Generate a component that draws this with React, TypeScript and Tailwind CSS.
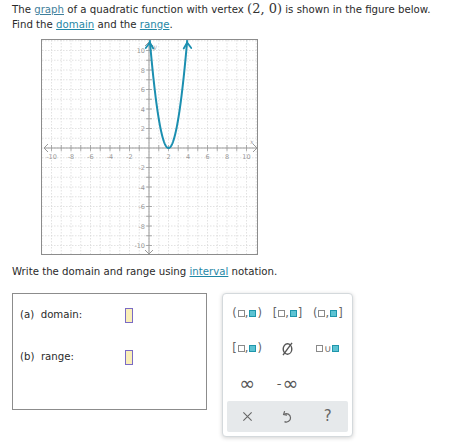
import React from "react";

const U = 9.75;
const OX = 107;
const OY = 108;

function Graph() {
    const ticks = Array.from({ length: 23 }, (_, i) => i - 11);
    const pts: string[] = [];
    for (let x = 0.08; x <= 3.921; x += 0.04) {
        const y = 3 * (x - 2) * (x - 2);
        pts.push(`${(OX + x * U).toFixed(2)},${(OY - y * U).toFixed(2)}`);
    }
    return (
        <svg width="217" height="216" viewBox="0 0 217 216" className="block">
            {/* grid */}
            {ticks.map((t) => (
                <g key={t}>
                    <line x1={OX + t * U} y1={0} x2={OX + t * U} y2={216} stroke="#d6d6d6" strokeWidth="0.7" strokeDasharray="1.5 1.5" />
                    <line x1={0} y1={OY + t * U} x2={217} y2={OY + t * U} stroke="#d6d6d6" strokeWidth="0.7" strokeDasharray="1.5 1.5" />
                </g>
            ))}
            {/* axes */}
            <line x1={2} y1={OY} x2={215} y2={OY} stroke="#9a9a9a" strokeWidth="1" />
            <line x1={OX} y1={2} x2={OX} y2={214} stroke="#9a9a9a" strokeWidth="1" />
            <polyline points={`6,${OY - 4} 2,${OY} 6,${OY + 4}`} fill="none" stroke="#9a9a9a" strokeWidth="1" />
            <polyline points={`211,${OY - 4} 215,${OY} 211,${OY + 4}`} fill="none" stroke="#9a9a9a" strokeWidth="1" />
            <polyline points={`${OX - 4},6 ${OX},2 ${OX + 4},6`} fill="none" stroke="#9a9a9a" strokeWidth="1" />
            <polyline points={`${OX - 4},210 ${OX},214 ${OX + 4},210`} fill="none" stroke="#9a9a9a" strokeWidth="1" />
            {ticks
                .filter((t) => t !== 0 && Math.abs(t) <= 10)
                .map((t) => (
                    <g key={"k" + t}>
                        <line x1={OX + t * U} y1={OY - 3} x2={OX + t * U} y2={OY + 3} stroke="#9a9a9a" strokeWidth="0.8" />
                        <line x1={OX - 3} y1={OY - t * U} x2={OX + 3} y2={OY - t * U} stroke="#9a9a9a" strokeWidth="0.8" />
                    </g>
                ))}
            {[-10, -8, -6, -4, -2, 2, 4, 6, 8, 10].map((t) => (
                <g key={"l" + t} fill="#9a9a9a" fontSize="6.5" fontFamily="'DejaVu Sans', sans-serif">
                    <text x={OX + t * U} y={OY + 11} textAnchor="middle">
                        {t}
                    </text>
                    <text x={OX - 4} y={OY - t * U + 2.5} textAnchor="end">
                        {t}
                    </text>
                </g>
            ))}
            <text x={OX + 4} y={9} fill="#9a9a9a" fontSize="6.5" fontStyle="italic" fontFamily="'DejaVu Serif', serif">
                y
            </text>
            <text x={208} y={OY - 4} fill="#9a9a9a" fontSize="6.5" fontStyle="italic" fontFamily="'DejaVu Serif', serif">
                x
            </text>
            {/* curve */}
            <polyline points={pts.join(" ")} fill="none" stroke="#1b8fb0" strokeWidth="2" strokeLinejoin="round" />
            <polyline points={`${OX + 0.08 * U - 4},8 ${OX + 0.08 * U},2.5 ${OX + 0.08 * U + 3.5},8.5`} fill="none" stroke="#1b8fb0" strokeWidth="1.8" strokeLinecap="round" strokeLinejoin="round" />
            <polyline points={`${OX + 3.92 * U - 3.5},8.5 ${OX + 3.92 * U},2.5 ${OX + 3.92 * U + 4},8`} fill="none" stroke="#1b8fb0" strokeWidth="1.8" strokeLinecap="round" strokeLinejoin="round" />
        </svg>
    );
}

function Sq({ filled }: { filled?: boolean }) {
    return filled ? (
        <span className="inline-block w-[7px] h-[7px] bg-[#5cc3d3] border border-[#1f96ab] mx-[1px]" />
    ) : (
        <span className="inline-block w-[7px] h-[7px] border border-[#8a8a8a] mx-[1px]" />
    );
}

function Interval({ l, r }: { l: string; r: string }) {
    return (
        <span className="flex items-center text-[11.5px] text-[#666]">
            <span>{l}</span>
            <Sq />
            <span className="-ml-[1px]">,</span>
            <Sq filled />
            <span>{r}</span>
        </span>
    );
}

function InputBox() {
    return <span className="inline-block w-[8px] h-[15px] border border-[#7a6bc4] bg-[#faefb8]" />;
}

export default function App() {
    return (
        <div className="bg-white w-[474px] h-[445px] px-[12px] pt-[2px] text-[10.2px] text-[#2a2a2a]" style={{ fontFamily: "'DejaVu Sans', Verdana, sans-serif" }}>
            <p className="leading-[15px]">
                The <span className="text-[#3f7f9c] underline">graph</span> of a quadratic function with vertex{" "}
                <span className="text-[13px] text-[#333] leading-none" style={{ fontFamily: "'DejaVu Serif', serif" }}>
                    (2, 0)
                </span>{" "}
                is shown in the figure below.
                <br />
                Find the <span className="text-[#1f87a6] underline">domain</span> and the{" "}
                <span className="text-[#1f87a6] underline">range</span>.
            </p>

            <div className="ml-[29px] mt-[7px] w-[217px] h-[216px] border border-[#8c8c8c] overflow-hidden">
                <Graph />
            </div>

            <p className="mt-[9px] leading-[15px]">
                Write the domain and range using <span className="text-[#1f87a6] underline">interval</span> notation.
            </p>

            <div className="flex gap-[15px] mt-[14px]">
                <div className="w-[195px] h-[117px] border border-[#8c8c8c] px-[7px] pt-[13px]">
                    <div className="flex items-center h-[16px]">
                        <span className="w-[105px]">(a)&nbsp; domain:</span>
                        <InputBox />
                    </div>
                    <div className="flex items-center h-[16px] mt-[26px]">
                        <span className="w-[105px]">(b)&nbsp; range:</span>
                        <InputBox />
                    </div>
                </div>

                <div className="w-[131px] h-[144px] rounded-[4px] border border-[#d4d9dc] bg-white shadow-[0_1px_4px_rgba(0,0,0,0.18)] px-[4px] pb-[4px] flex flex-col">
                    <div className="grid grid-cols-3 flex-1 pt-[2px]">
                        <div className="flex justify-center items-center h-[35px]">
                            <Interval l="(" r=")" />
                        </div>
                        <div className="flex justify-center items-center h-[35px]">
                            <Interval l="[" r="]" />
                        </div>
                        <div className="flex justify-center items-center h-[35px]">
                            <Interval l="(" r="]" />
                        </div>
                        <div className="flex justify-center items-center h-[35px]">
                            <Interval l="[" r=")" />
                        </div>
                        <div className="flex justify-center items-center h-[35px]">
                            <svg width="13" height="14" viewBox="0 0 13 14">
                                <ellipse cx="6.5" cy="7" rx="4.3" ry="5.2" fill="none" stroke="#555" strokeWidth="1.4" />
                                <line x1="11" y1="0.8" x2="2" y2="13.2" stroke="#555" strokeWidth="1.4" />
                            </svg>
                        </div>
                        <div className="flex justify-center items-center h-[35px]">
                            <span className="flex items-center text-[11px] text-[#666]">
                                <Sq />
                                <span className="text-[10px] leading-none">∪</span>
                                <Sq filled />
                            </span>
                        </div>
                        <div className="flex justify-center items-center h-[35px] text-[19px] leading-none text-[#555]">∞</div>
                        <div className="flex justify-center items-center h-[35px] text-[19px] leading-none text-[#555]">
                            <span className="text-[13px] mr-[1px]">-</span>∞
                        </div>
                        <div />
                    </div>
                    <div className="h-[31px] bg-[#e6e9eb] rounded-[2px] grid grid-cols-3 items-center text-[#666]">
                        <div className="flex justify-center">
                            <svg width="11" height="11" viewBox="0 0 12 12">
                                <path d="M1.5 1.5 L10.5 10.5 M10.5 1.5 L1.5 10.5" stroke="#666" strokeWidth="1.2" />
                            </svg>
                        </div>
                        <div className="flex justify-center">
                            <svg width="12" height="14" viewBox="0 0 12 14">
                                <path d="M3.2 4.2 A4.2 4.2 0 1 1 3.5 11.6" fill="none" stroke="#666" strokeWidth="1.2" />
                                <path d="M3.6 1.2 L2.6 4.6 L6 5.2" fill="none" stroke="#666" strokeWidth="1.2" />
                            </svg>
                        </div>
                        <div className="flex justify-center text-[15px] leading-none">?</div>
                    </div>
                </div>
            </div>
        </div>
    );
}
